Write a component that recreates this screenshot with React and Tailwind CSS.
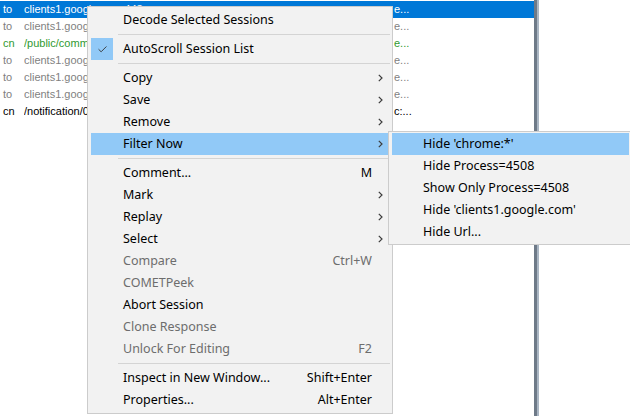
import { Check } from 'lucide-react';

const ROWS = [
    { proto: 'to', host: 'clients1.google.com:443', tail: 'e...', tone: 'selected' },
    { proto: 'to', host: 'clients1.google.com:443', tail: 'e...', tone: 'gray' },
    { proto: 'cn', host: '/public/common/chrome', tail: 'e...', tone: 'green' },
    { proto: 'to', host: 'clients1.google.com:443', tail: 'e...', tone: 'gray' },
    { proto: 'to', host: 'clients1.google.com:443', tail: 'e...', tone: 'gray' },
    { proto: 'to', host: 'clients1.google.com:443', tail: 'e...', tone: 'gray' },
    { proto: 'cn', host: '/notification/0', tail: 'c:...', tone: 'black' },
];

const toneClass = {
    selected: 'bg-[#0078d7] text-white',
    gray: 'text-[#7f7f7f]',
    green: 'text-[#2f9a2f]',
    black: 'text-black',
};

const MENU = [
    { label: 'Decode Selected Sessions' },
    { sep: true },
    { label: 'AutoScroll Session List', checked: true },
    { sep: true },
    { label: 'Copy', sub: true },
    { label: 'Save', sub: true },
    { label: 'Remove', sub: true },
    { label: 'Filter Now', sub: true, active: true },
    { sep: true },
    { label: 'Comment...', key: 'M' },
    { label: 'Mark', sub: true },
    { label: 'Replay', sub: true },
    { label: 'Select', sub: true },
    { label: 'Compare', key: 'Ctrl+W', disabled: true },
    { label: 'COMETPeek', disabled: true },
    { label: 'Abort Session' },
    { label: 'Clone Response', disabled: true },
    { label: 'Unlock For Editing', key: 'F2', disabled: true },
    { sep: true },
    { label: 'Inspect in New Window...', key: 'Shift+Enter' },
    { label: 'Properties...', key: 'Alt+Enter' },
];

const FILTER_ITEMS = [
    "Hide 'chrome:*'",
    'Hide Process=4508',
    'Show Only Process=4508',
    "Hide 'clients1.google.com'",
    'Hide Url...',
];

const Chevron = () => (
    <svg width="5" height="8" viewBox="0 0 5 8" className="absolute right-[7px] top-[7px]">
        <path d="M0.8 0.8 L4 4 L0.8 7.2" fill="none" stroke="#3c3c3c" strokeWidth="1.2" />
    </svg>
);

const MenuItem = ({ item }) => {
    if (item.sep) {
        return (
            <div className="h-[7px] flex items-center pl-[27px]">
                <div className="h-px w-full bg-[#d4d4d4]" />
            </div>
        );
    }
    return (
        <div
            className={`relative h-[22px] flex items-center pl-[32px] pr-[18px] ${item.active ? 'bg-[#91c9f7]' : ''} ${item.disabled ? 'text-[#6d6d6d]' : 'text-black'}`}
        >
            {/* check gutter */}
            {item.checked && (
                <div className="absolute left-0 top-0 w-[22px] h-[22px] bg-[#91c9f7] flex items-center justify-center">
                    <Check className="w-[11px] h-[11px] text-[#333]" strokeWidth={2} />
                </div>
            )}
            <span className="flex-1 whitespace-nowrap">{item.label}</span>
            {item.key && <span className="whitespace-nowrap">{item.key}</span>}
            {item.sub && <Chevron />}
        </div>
    );
};

export default function App() {
    return (
        <div className="relative w-[630px] h-[416px] overflow-hidden bg-white">
            {/* session list + splitter */}
            <div className="flex h-full">
                <div
                    className="w-[534px] pt-px text-[11px] leading-[17px]"
                    style={{ fontFamily: '"Liberation Sans", Arial, sans-serif' }}
                >
                    {ROWS.map((r, i) => (
                        <div key={i} className={`h-[17px] flex whitespace-nowrap ${toneClass[r.tone]}`}>
                            <span className="w-[24px] pl-[3px]">{r.proto}</span>
                            <span className="w-[370px] overflow-hidden">{r.host}</span>
                            <span>{r.tail}</span>
                        </div>
                    ))}
                </div>
                <div className="w-[3px] bg-[#6e7a88]" />
                <div className="w-[2px] bg-[#aab6c3]" />
                <div className="flex-1" />
            </div>

            {/* context menu */}
            <div
                className="absolute left-[87px] top-[6px] w-[306px] border border-[#cccccc] bg-[#f2f2f2] pt-[2px] pb-[2px] pl-[3px] pr-[2px] text-[12.5px]"
                style={{ fontFamily: '"Noto Sans", "Liberation Sans", sans-serif' }}
            >
                {MENU.map((m, i) => (
                    <MenuItem key={i} item={m} />
                ))}
            </div>

            {/* Filter Now submenu */}
            <div
                className="absolute left-[388px] top-[131px] w-[244px] border border-[#cccccc] bg-[#f2f2f2] pt-px pb-[1px] pl-[3px] pr-[2px] text-[12.5px]"
                style={{ fontFamily: '"Noto Sans", "Liberation Sans", sans-serif' }}
            >
                {FILTER_ITEMS.map((label, i) => (
                    <div
                        key={label}
                        className={`h-[22px] flex items-center pl-[31px] whitespace-nowrap text-black ${i === 0 ? 'bg-[#91c9f7]' : ''}`}
                    >
                        {label}
                    </div>
                ))}
            </div>
        </div>
    );
}
